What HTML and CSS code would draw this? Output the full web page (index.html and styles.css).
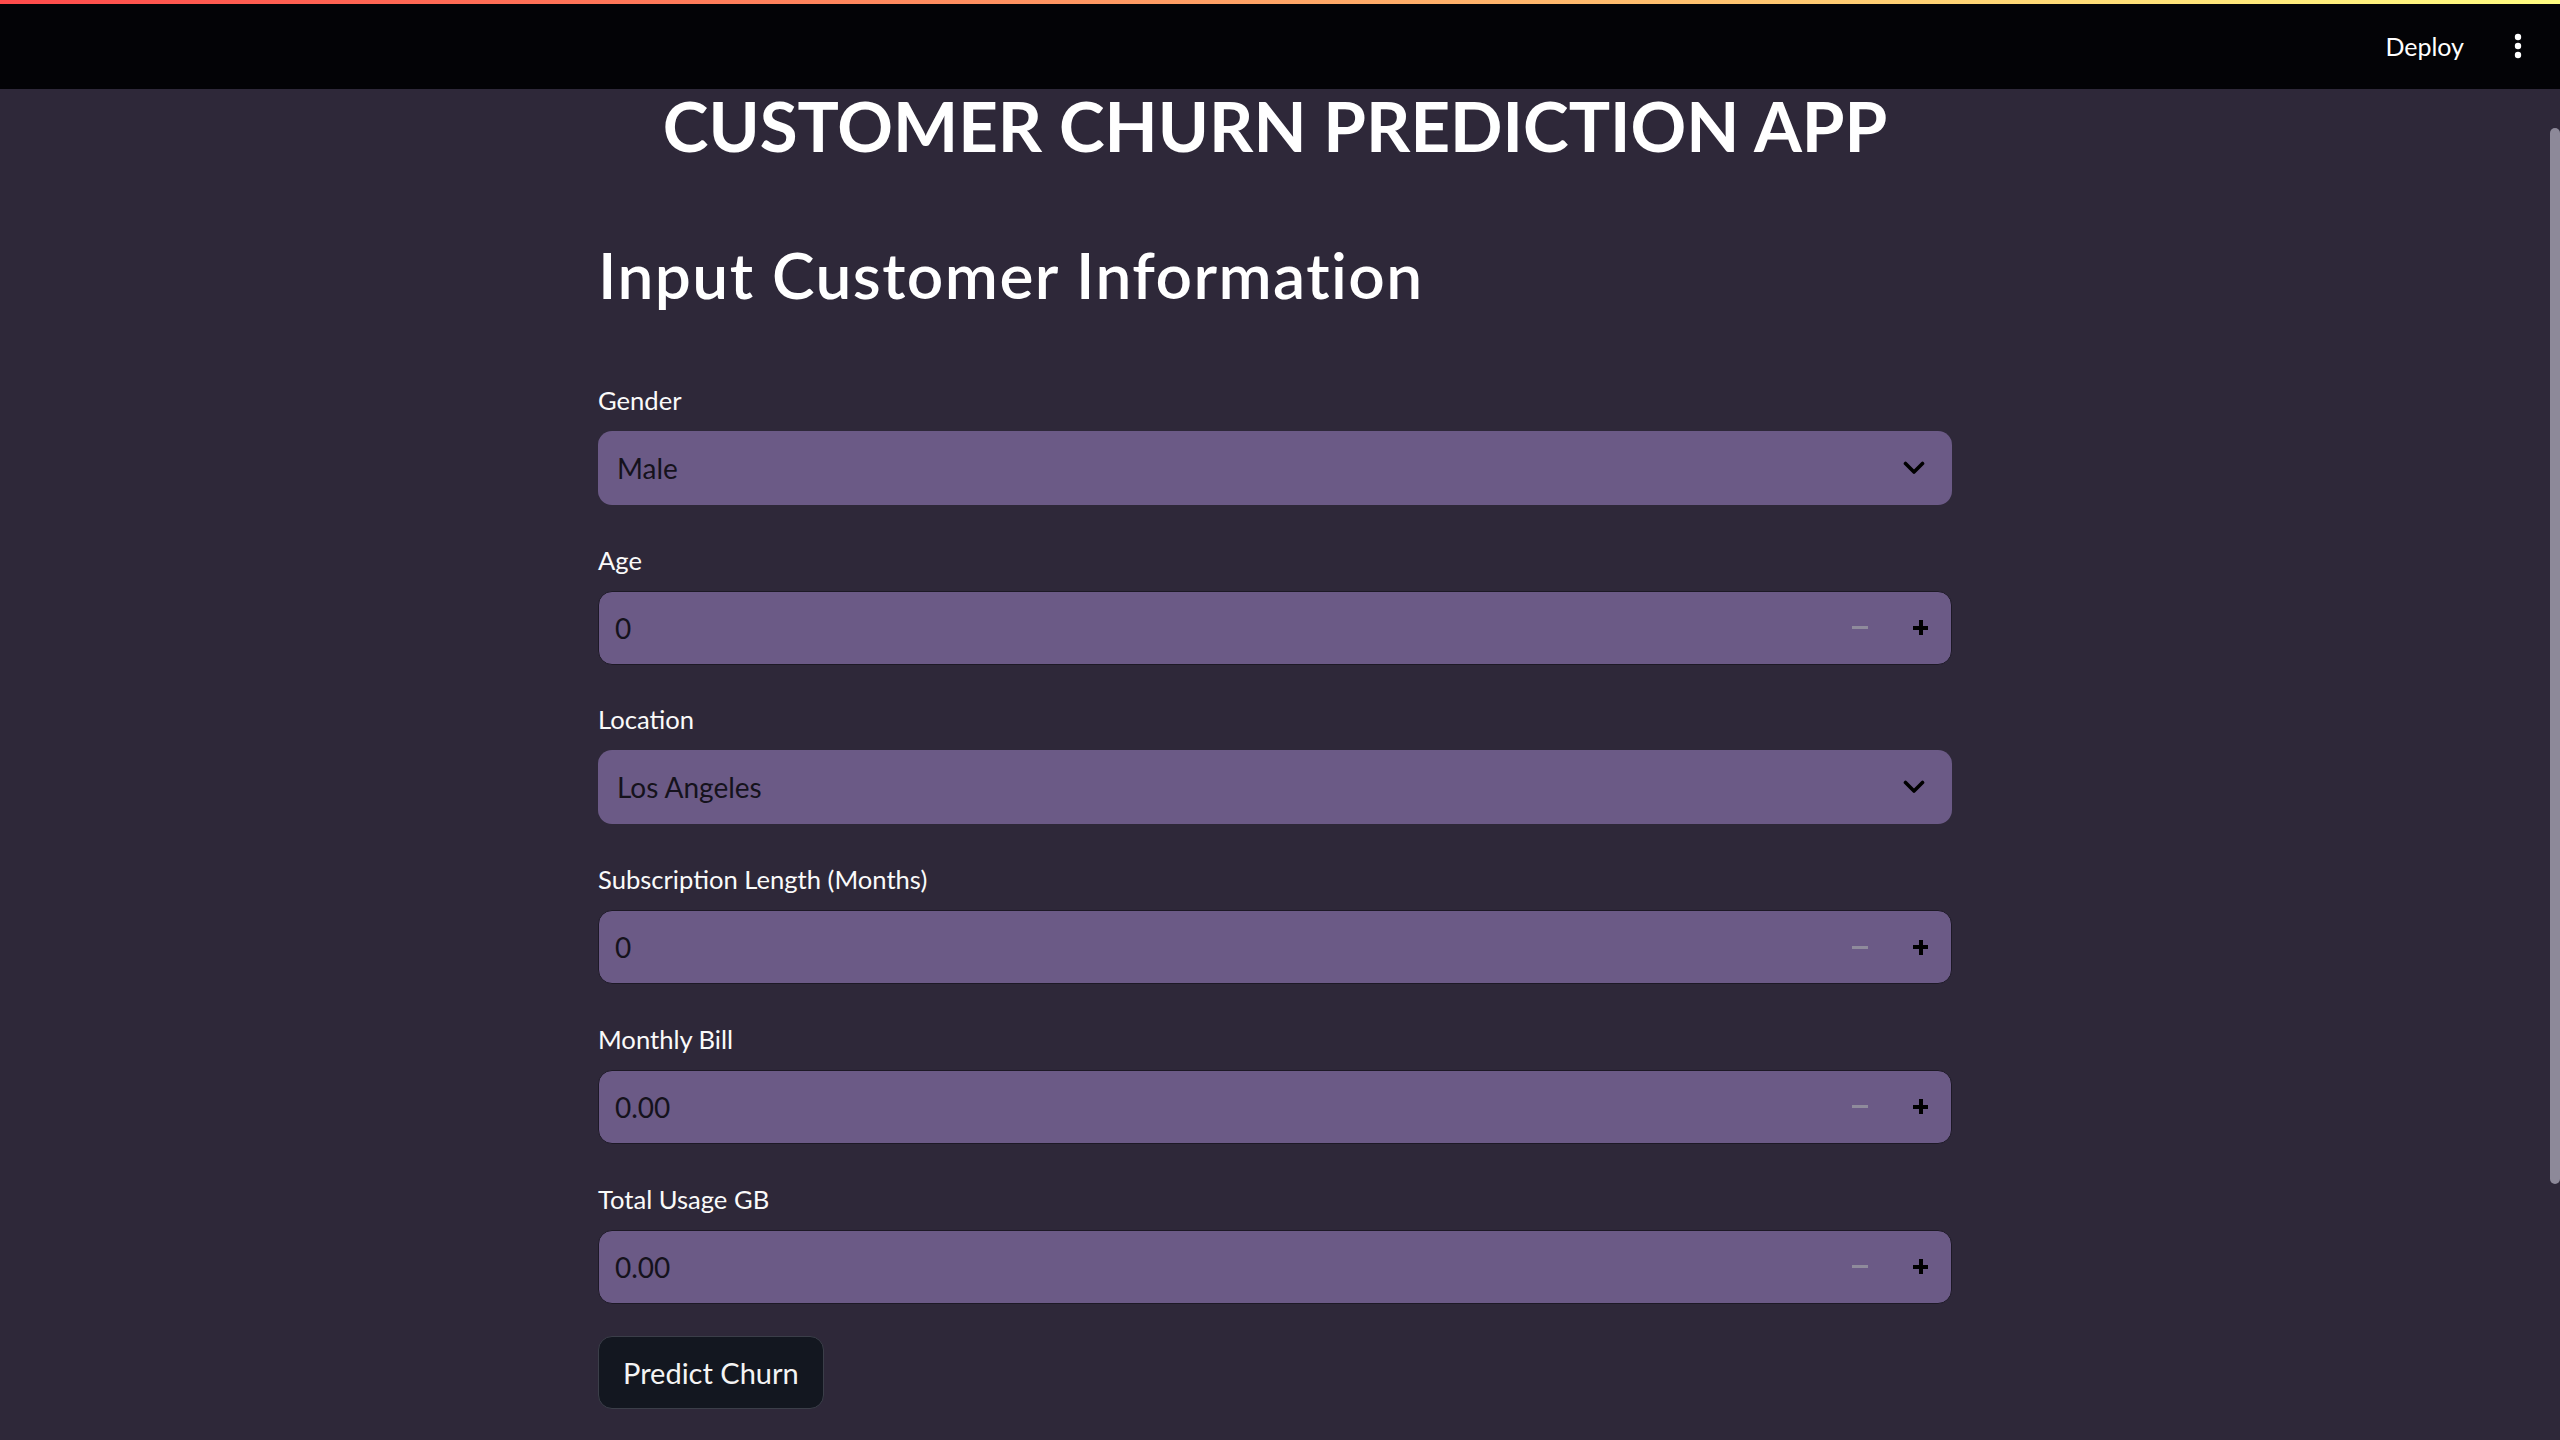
FILE: index.html
```html
<!DOCTYPE html>
<html lang="en">
<head>
    <meta charset="UTF-8">
    <meta name="viewport" content="width=device-width, initial-scale=1.0">
    <title>Customer Churn Prediction App</title>
    <link rel="stylesheet" href="styles.css">
</head>
<body>
    <header class="app-header">
        <div class="decoration"></div>
        <div class="toolbar">
            <span class="deploy">Deploy</span>
            <span class="menu">
                <svg width="8" height="26" viewBox="0 0 8 26">
                    <circle cx="4" cy="4" r="3.2" fill="#ffffff"/>
                    <circle cx="4" cy="13" r="3.2" fill="#ffffff"/>
                    <circle cx="4" cy="22" r="3.2" fill="#ffffff"/>
                </svg>
            </span>
        </div>
    </header>

    <main class="main">
        <div class="block">
            <h1 class="title">CUSTOMER CHURN PREDICTION APP</h1>
            <h2 class="subheader">Input Customer Information</h2>

            <div class="form">
                <div class="field">
                    <label class="field-label">Gender</label>
                    <div class="select">
                        <span class="value">Male</span>
                        <svg class="chevron" width="22" height="14" viewBox="0 0 22 14">
                            <path d="M2.5 2.5 L11 11 L19.5 2.5" fill="none" stroke="#000" stroke-width="3.6" stroke-linecap="round" stroke-linejoin="round"/>
                        </svg>
                    </div>
                </div>

                <div class="field">
                    <label class="field-label">Age</label>
                    <div class="number">
                        <span class="value">0</span>
                        <span class="step"><span class="minus"></span></span>
                        <span class="step"><span class="plus"></span></span>
                    </div>
                </div>

                <div class="field">
                    <label class="field-label">Location</label>
                    <div class="select">
                        <span class="value">Los Angeles</span>
                        <svg class="chevron" width="22" height="14" viewBox="0 0 22 14">
                            <path d="M2.5 2.5 L11 11 L19.5 2.5" fill="none" stroke="#000" stroke-width="3.6" stroke-linecap="round" stroke-linejoin="round"/>
                        </svg>
                    </div>
                </div>

                <div class="field">
                    <label class="field-label">Subscription Length (Months)</label>
                    <div class="number">
                        <span class="value">0</span>
                        <span class="step"><span class="minus"></span></span>
                        <span class="step"><span class="plus"></span></span>
                    </div>
                </div>

                <div class="field">
                    <label class="field-label">Monthly Bill</label>
                    <div class="number">
                        <span class="value">0.00</span>
                        <span class="step"><span class="minus"></span></span>
                        <span class="step"><span class="plus"></span></span>
                    </div>
                </div>

                <div class="field">
                    <label class="field-label">Total Usage GB</label>
                    <div class="number">
                        <span class="value">0.00</span>
                        <span class="step"><span class="minus"></span></span>
                        <span class="step"><span class="plus"></span></span>
                    </div>
                </div>
            </div>

            <button class="predict">Predict Churn</button>
        </div>
    </main>

    <div class="scroll-thumb"></div>
</body>
</html>
```

FILE: styles.css
```css
* {
    margin: 0;
    padding: 0;
    box-sizing: border-box;
    font-family: 'Lato', 'Open Sans', sans-serif;
}

body {
    height: 100vh;
    overflow: hidden;
    background: #2e2839;
    color: #fafafa;
}

/* Top bar */
.app-header {
    height: 89px;
    background: #030306;
    display: flex;
    flex-direction: column;
}

.decoration {
    height: 4px;
    background: linear-gradient(90deg, #ff4b4b, #fffd80);
}

.toolbar {
    flex: 1;
    display: flex;
    align-items: center;
    justify-content: flex-end;
    padding-right: 22px;
    padding-bottom: 1px;
}

.deploy {
    font-size: 25px;
    line-height: 1;
    color: #ffffff;
    margin-right: 34px;
}

.menu {
    width: 40px;
    display: flex;
    justify-content: center;
}

/* Main column */
.main {
    padding: 1.5px 10px 0 0;
}

.block {
    width: 1354px;
    margin: 0 auto;
}

.title {
    font-size: 69px;
    font-weight: 700;
    line-height: 1;
    text-align: center;
    color: #ffffff;
}

.subheader {
    margin-top: 83.6px;
    font-size: 64px;
    font-weight: 600;
    line-height: 1;
    letter-spacing: 1.45px;
    color: #ffffff;
}

.form {
    margin-top: 77.9px;
    display: flex;
    flex-direction: column;
    gap: 39.75px;
}

.field {
    display: flex;
    flex-direction: column;
}

.field-label {
    font-size: 25.6px;
    line-height: 30px;
    margin-bottom: 16px;
    color: #fafafa;
}

.select,
.number {
    height: 74px;
    background: #6b5a86;
    border-radius: 14px;
    display: flex;
    align-items: center;
    color: #15121c;
    font-size: 28px;
}

.select {
    justify-content: space-between;
    padding: 0 27px 0 19px;
}

.number {
    border: 1px solid #1d1926;
}

.number .value {
    flex: 1;
    padding-left: 16px;
}

.step {
    width: 61px;
    height: 100%;
    display: flex;
    align-items: center;
    justify-content: center;
}

.minus {
    width: 16px;
    height: 3px;
    background: #8f8b9c;
}

.plus {
    position: relative;
    width: 15px;
    height: 15px;
}

.plus::before,
.plus::after {
    content: "";
    position: absolute;
    background: #000000;
}

.plus::before {
    left: 0;
    top: 5.5px;
    width: 15px;
    height: 4px;
}

.plus::after {
    left: 5.5px;
    top: 0;
    width: 4px;
    height: 15px;
}

.predict {
    margin-top: 32px;
    height: 73px;
    padding: 0 24px;
    background: #131720;
    border: 1px solid #3b3e49;
    border-radius: 14px;
    color: #f4f4f4;
    font-size: 29px;
    cursor: pointer;
}

.scroll-thumb {
    position: fixed;
    top: 128px;
    right: 0;
    width: 10px;
    height: 1056px;
    border-radius: 5px;
    background: #8d8999;
}
```
